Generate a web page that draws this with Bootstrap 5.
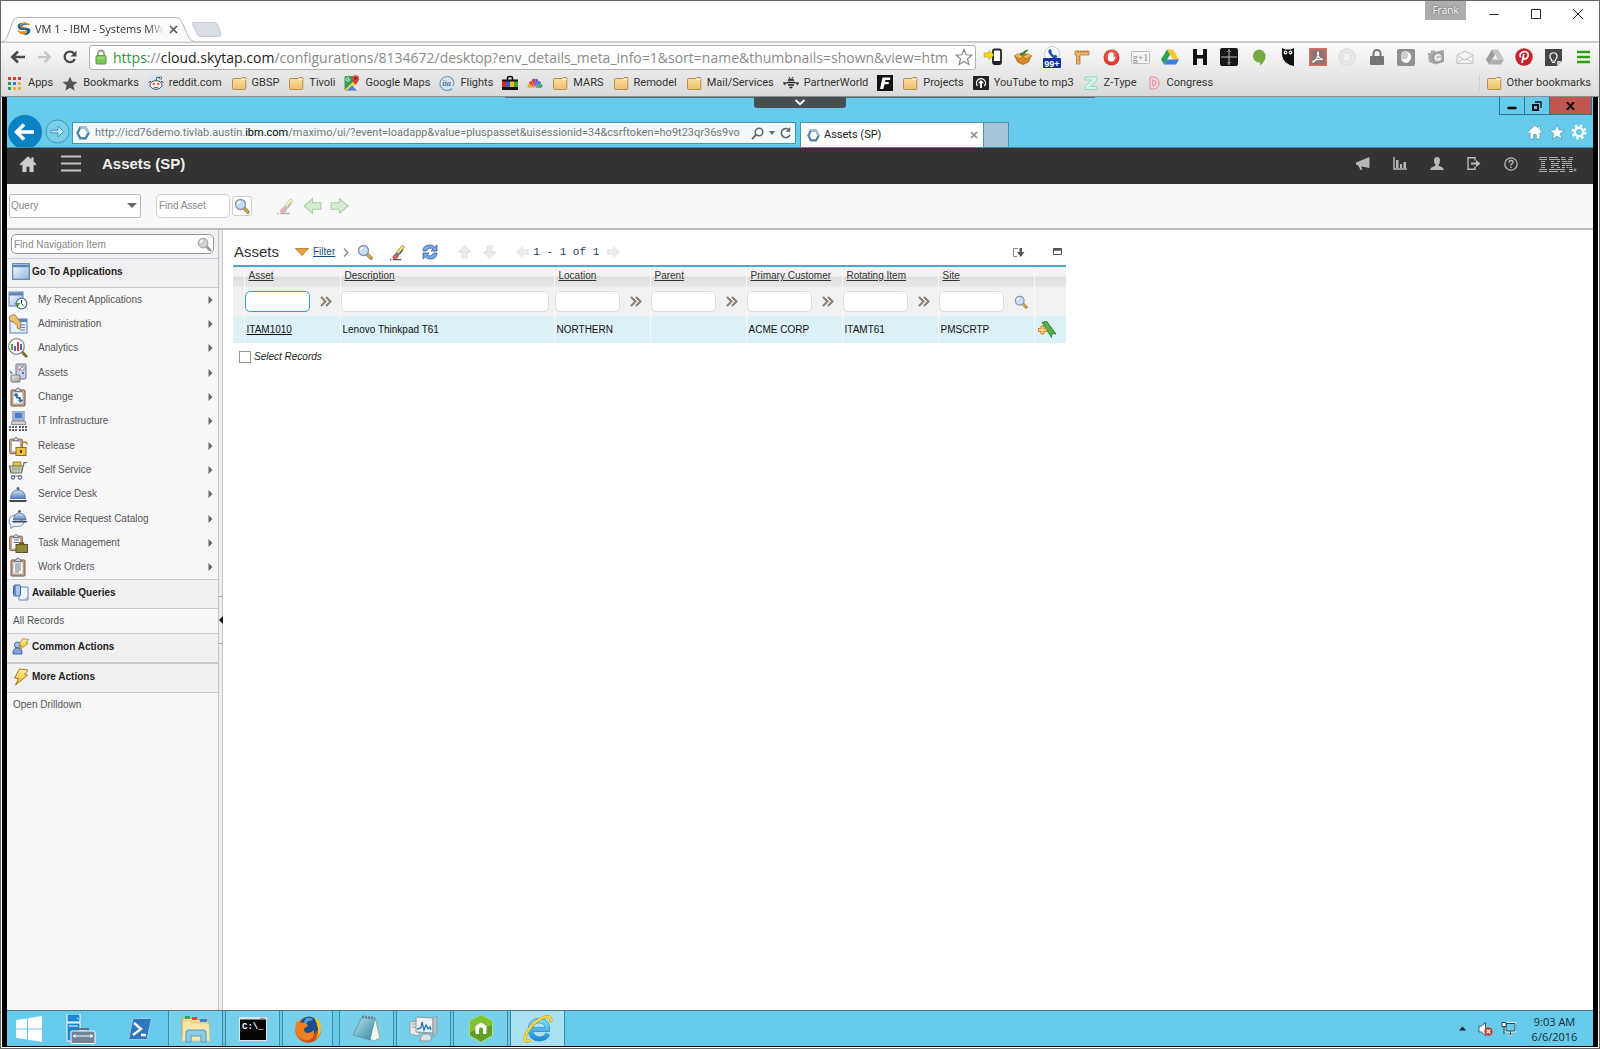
<!DOCTYPE html>
<html lang="en">
<head>
<meta charset="utf-8">
<meta name="viewport" content="width=device-width, initial-scale=1">
<title>Assets (SP)</title>
<link rel="stylesheet" href="https://cdn.jsdelivr.net/npm/bootstrap@5.3.0/dist/css/bootstrap.min.css">
<style>
:root{--ui:"Open Sans","Noto Sans",sans-serif;--narrow:Roboto,"Open Sans",sans-serif;--app:"Liberation Sans",Arial,sans-serif;--sky:#66cbea}
body{font-family:var(--app);font-size:10px;line-height:16px;color:#222;background:#fff;border:1px solid #666}
button{padding:0;border:0;background:none;color:inherit;line-height:1;display:inline-flex;align-items:center;justify-content:center}
svg{display:block;flex:none}
a{color:inherit}
.ui-font{font-family:var(--ui);font-size:11px}
/* browser window */
.title-row{height:40px}
.win-tab{width:190px;height:24px;margin-left:1px;padding:0 14px 0 15px;color:#333}
.win-tab>.tab-shape{left:0;top:0}
.tab-text{mask-image:linear-gradient(90deg,#000 88%,transparent);-webkit-mask-image:linear-gradient(90deg,#000 88%,transparent)}
.user-tag{background:#adadad;color:#fff;font-size:10px;line-height:19px;width:41px;height:19px;text-shadow:0 0 2px #444}
.win-btns{gap:28px;padding:6px 14px 0 21px}
.browser-bars{background:linear-gradient(#fafafa,#dadada);border-top:2px solid #ccc;border-bottom:1px solid #8d8d8d;height:56px;font-family:var(--narrow)}
.nav-row{height:28px;padding:0 6px 0 9px}
.nav-btns{gap:11px;width:79px}
.omni{height:25px;background:#fff;border:1px solid #b0b0b0;border-radius:3px;padding:0 2px 0 5px;width:887px}
.omni-text{font-family:var(--ui);font-size:14px;line-height:23px;color:#8a8a8a;margin-left:6px;outline:0}
.ext-row{padding-left:7px}
.ext-row button{width:20px}
.marks{height:24px;color:#333;padding:0 8px 0 6px;gap:9px}
.marks a{text-decoration:none;gap:5px}
.marks .other{border-left:1px solid #c8d4dc;padding-left:6px}
/* remote desktop */
.remote{border:solid #000;border-width:0 5px 1px;margin:0 1px 1px}
.ie-head{background:var(--sky);border-bottom:1px solid #3c8aa5;height:51px;font-family:var(--narrow)}
.pull-tab{width:92px;height:11px;background:#474f53;border-radius:0 0 3px 3px;left:50%;top:0;margin-left:-46px}
.pull-line{left:498px;right:498px;top:0;height:1px;background:#3e7284}
.ie-ctl{padding-right:1px}
.ie-ctl button{height:18px;width:25px;border:1px solid #35758b;border-top:0;border-right:0}
.ie-ctl .ie-close{width:43px;background:#c25650;border-right:1px solid #35758b}
.ie-row{height:32px}
.ie-addr{height:22px;background:#f1fafd;border:1px solid #4593ac;margin:0 4px 3px 1px;padding:0 3px;gap:5px;color:#777}
.ie-tab{width:184px;height:25px;background:#fff;border:1px solid #4593ac;border-bottom:0;padding:0 5px 0 6px;color:#222}
.ie-new{width:25px;height:25px;background:#a2c6d5;border:1px solid #4593ac;border-left:0;border-bottom:0}
.ie-tools{gap:6px;padding:0 6px 7px 0}
.app-nav{background:#333;height:36px;padding:0 16px 5px 12px;color:#ccc}
.app-nav h1{font-size:15px;line-height:20px;font-weight:700;color:#eee;margin:0 0 0 21px}
.app-nav .right-tools{gap:17px}
.right-tools button{width:20px}
.app-bar{background:#f8f8f8;height:46px;border-bottom:2px solid #bcbcbc;padding:0 2px 1px}
.fld{border:1px solid #d0d0d0;border-radius:5px;background:#fff;font:10px var(--app);padding:0 3px;outline:0;color:#333}
.fld::placeholder{color:#888;opacity:1}
.fld.query{width:132px;height:24px;border-radius:2px;color:#888;padding:0 1px;border-color:#bbb;appearance:none;background:#fff url("data:image/svg+xml,%3Csvg xmlns='http://www.w3.org/2000/svg' width='10' height='5'%3E%3Cpath d='M0 0h10L5 5z' fill='%23666'/%3E%3C/svg%3E") no-repeat right 3px center}
.fld.find{width:74px;height:24px;margin-left:15px;padding:0 2px}
.lens-btn{width:20px;height:20px;border:1px solid #ccc;border-radius:3px;background:#fff;margin-left:2px}
/* side navigation */
.side{width:211px;background:#f7f6f9;color:#555}
.side-find{height:28px;padding:4px;background:#f1f0f4}
.side-find .fld{height:20px;border-color:#999;padding:0 22px 0 2px}
.side-find svg{right:6px;top:7px}
.side h2{font-size:10px;line-height:16px;font-weight:700;color:#222;background:#f0eff2;border-top:1px solid #c9c9cc;border-bottom:1px solid #c9c9cc;height:30px;padding:0 5px 3px;margin:0;gap:2px}
.side .list-group-item{background:none;border:0;color:#555;height:24px;padding:0 5px 0 1px;gap:10px}
.side .list-group-item:nth-child(3n):not(:last-child){margin-bottom:1px}
.side .plain{height:24px;padding:0 6px;text-decoration:none}
.splitter{width:5px;background:#eeedf0;border:solid #c4c4c8;border-width:0 1px}
.grip{top:366px;left:0;width:4px;height:48px;border:solid #aaa;border-width:1px 0}
/* result list */
.work{padding:9px 6px 0 10px}
.list-head{height:26px;width:833px;max-width:100%;color:#333}
.list-head h3{font-size:15px;line-height:20px;margin:0 0 0 1px;color:#333}
.pager{font:11px "Liberation Mono",monospace;color:#1d3c5c}
.grid-list{width:833px;max-width:100%;table-layout:fixed;margin:0;border-top:2px solid #4ea7c6}
.grid-list th,.grid-list td{padding:0;border-left:1px solid #f8f8f8;vertical-align:middle;font-weight:400;color:#333}
.grid-list th:first-child,.grid-list td:first-child{border-left:0}
.grid-list .heads th{height:21px;background:linear-gradient(#f2f2f2 0 45%,#dedede 50%,#e8e8e8);padding:0 0 2px 4px}
.grid-list .finds td{height:29px;background:#f1f1f1}
.grid-list .data td{height:27px;background:#dcf0f7;color:#111;padding-left:2px}
.grid-list .fld{width:65px;height:21px;border-color:#dcdcdc}
.grid-list .fld.wide{width:208px}
.grid-list .fld.now{border-color:#2f9cc0}
.look{margin-left:10px}
.sel-row{padding:6px 0 0 6px;gap:3px;color:#222}
.sel-row input{appearance:none;width:12px;height:12px;border:1px solid #999;background:#fff;margin:0}
/* task bar */
.tasks{height:36px;background:var(--sky);border-top:1px solid #4d7a88}
.tasks .open-app{width:55px;border:solid #3f8aa3;border-width:0 1px;background:#76d0eb;margin-right:2px}
.tasks .open-app.slim{width:51px}
.tasks .open-app.now{background:#a9e0f2}
.clock{line-height:15px;color:#1b2b33;width:77px}
</style>
<script src="https://cdn.jsdelivr.net/npm/bootstrap@5.3.0/dist/js/bootstrap.bundle.min.js"></script>
</head>
<body class="d-flex flex-column min-vh-100">
<svg width="0" height="0" class="position-absolute" aria-hidden="true">
<defs>
<linearGradient id="gGold" x1="0" y1="0" x2="0" y2="1"><stop offset="0" stop-color="#fbe0a6"/><stop offset="1" stop-color="#efbd68"/></linearGradient>
<linearGradient id="gBlue" x1="0" y1="0" x2="1" y2="1"><stop offset="0" stop-color="#fff"/><stop offset="1" stop-color="#8db4e2"/></linearGradient>
<linearGradient id="gBell" x1="0" y1="0" x2="0" y2="1"><stop offset="0" stop-color="#d7e8f8"/><stop offset="1" stop-color="#4e7dbd"/></linearGradient>
<linearGradient id="gSteel" x1="0" y1="0" x2="1" y2="1"><stop offset="0" stop-color="#f2f2f2"/><stop offset="1" stop-color="#9a9a9a"/></linearGradient>
<linearGradient id="gBolt" x1="0" y1="0" x2="0" y2="1"><stop offset="0" stop-color="#fff2a0"/><stop offset="1" stop-color="#f5b325"/></linearGradient>
<linearGradient id="gFox" x1="0" y1="0" x2="1" y2="1"><stop offset="0" stop-color="#f08a24"/><stop offset="1" stop-color="#c63d12"/></linearGradient>
<linearGradient id="gPad" x1="0" y1="0" x2="1" y2="1"><stop offset="0" stop-color="#bfe3ec"/><stop offset="1" stop-color="#2f8ba4"/></linearGradient>
<linearGradient id="gIe" x1="0" y1="0" x2="0" y2="1"><stop offset="0" stop-color="#7fdcf8"/><stop offset="1" stop-color="#1b8fd6"/></linearGradient>
</defs>
<symbol id="folder" viewBox="0 0 16 16"><path d="M1.500 4.500q0-1 1-1h7.500l1-1h3q.8 0 .8.8v10.200q0 1-1 1h-11.300q-1 0-1-1z" fill="url(#gGold)" stroke="#b28643" stroke-width=".9"/><path d="M10.500 4.500h4" stroke="#fff3d6"/></symbol>
<symbol id="lens" viewBox="0 0 16 16"><path d="M10 10l4 4" stroke="#6e6e6e" stroke-width="3.200" stroke-linecap="round"/><path d="M10.800 10.800l3 3" stroke="#e2a33a" stroke-width="2.200" stroke-linecap="round"/><circle cx="6.500" cy="6.500" r="5" fill="#c3dff5" stroke="#8a93a5" stroke-width="1.300"/><path d="M3.500 6.500a3 3 0 0 1 3-3" stroke="#fff" stroke-width="1.300" fill="none"/></symbol>
<symbol id="lensGray" viewBox="0 0 16 16"><path d="M10 10l4 4" stroke="#999" stroke-width="3" stroke-linecap="round"/><circle cx="6.500" cy="6.500" r="5" fill="#d0d0d0" stroke="#a8a8a8" stroke-width="1.300"/><path d="M3.500 6.500a3 3 0 0 1 3-3" stroke="#fff" stroke-width="1.300" fill="none"/></symbol>
<symbol id="eraser" viewBox="0 0 18 18"><path d="M1 16.500h1.500M4 16.500h9" stroke="#555" stroke-width="1.300"/><path d="M8 8.500l5.500-6.500q2.500-.5 3 1.500L11.500 11z" fill="#f3dc7c" stroke="#a08438" stroke-width=".8"/><path d="M8 8.500l3.500 2.500-1.500 2L6.300 10.600z" fill="#5b83c4"/><path d="M6.300 10.600L10 13l-2 2.500H4.500L4 13.500z" fill="#e0605a" stroke="#a33" stroke-width=".6"/><path d="M14.500 6l-3.500 4.500" stroke="#555" stroke-width="1.400"/></symbol>
<symbol id="arrR" viewBox="0 0 18 16"><path d="M1 5h8V1l8 7-8 7v-4H1z" stroke-linejoin="round"/></symbol>
<symbol id="chev" viewBox="0 0 12 11"><path d="M1 1l4.500 4.500L1 10M6 1l4.500 4.500L6 10" fill="none" stroke="#8f7c68" stroke-width="1.900"/></symbol>
<symbol id="caret" viewBox="0 0 5 8"><path d="M.5 0L4.500 4l-4 4z" fill="#666"/></symbol>
<symbol id="hexRing" viewBox="0 0 14 14"><path d="M4.300 1.700h5.400L12.500 7l-2.800 5.300H4.300L1.500 7z" fill="#fff" stroke="#4f83a6" stroke-width="2.400"/><path d="M4.300 1.700h5.400L12.500 7" fill="none" stroke="#9cc3da" stroke-width="2.400"/></symbol>
<symbol id="board" viewBox="0 0 20 20"><rect x="3" y="3" width="14" height="16" rx="1" fill="#d9a878" stroke="#7c5537"/><path d="M5 5h10v12H5z" fill="#fff" stroke="#8a9cb5" stroke-width=".8"/><path d="M6.500 4.500q0-1.500 1.500-1.500 .5-2 2-2t2 2q1.500 0 1.500 1.500z" fill="#cdd3da" stroke="#667" stroke-width=".8"/></symbol>
<symbol id="bolt" viewBox="0 0 18 18"><path d="M7.500 1L16 2l-3.500 4.500 3 .8L3.500 17l3-6.500L2.500 10z" fill="url(#gBolt)" stroke="#a97c1d" stroke-width="1"/></symbol>
<symbol id="houseW" viewBox="0 0 16 16"><path d="M8 1L.5 8.200l1.300 1.200L3 8.400V15h3.700v-4.500h2.600V15H13V8.400l1.200 1 1.300-1.200-2.500-2.400V2h-2v1.900z"/></symbol>
</svg>

<!-- window title -->
<header class="title-row d-flex ui-font">
  <div class="win-tab position-relative d-flex align-items-center align-self-end">
    <svg class="tab-shape position-absolute" width="192" height="25" viewBox="0 0 192 25"><path d="M0 24.500C4 24 5 21 7 15L11 4Q12.500.5 16 .5H174q4 0 5.500 3.500L186 19q2 5 6 5.500" fill="#fbfbfb" stroke="#b5b5b5"/></svg>
    <svg class="position-relative" width="14" height="14" viewBox="0 0 14 14"><path d="M12.500 2.500Q9-.5 4 1T1.500 6.500Q3 8.500 7 8q3-.3 3 1.500t-4 2.500Q10 14.500 13 10.500 14.500 6.500 10 5.800 5 5.500 5 4.200 6 2 12.500 2.500z" fill="#14658f"/><path d="M12.500 2.500Q9 .5 5.500 2T5 5Q6 5.800 9 5.700l-4-.2Q2 4 4 2 8-.5 12.500 2.500zM1 8.500q3 1.800 6 1t3-.5q-.5 3-4 3Q2.500 12 1 8.500z" fill="#f08a1c" stroke="#f08a1c" stroke-width=".8"/></svg>
    <span class="tab-text position-relative text-nowrap ms-1">VM 1 - IBM - Systems MW</span>
    <button class="position-relative ms-auto" aria-label="Close tab"><svg width="9" height="9" viewBox="0 0 9 9"><path d="M1 1l7 7M8 1L1 8" stroke="#555" stroke-width="1.600"/></svg></button>
  </div>
  <button class="align-self-end mb-1" aria-label="New tab"><svg width="30" height="15" viewBox="0 0 30 15"><path d="M1 .5h21q3 0 4 2.500l3 9q.5 2.500-2 2.500H9q-3 0-4-2.500L.5 2Q0 .5 1 .5z" fill="#d8dee6" stroke="#c9ced6"/></svg></button>
  <div class="ms-auto d-flex align-items-start">
    <div class="user-tag text-center">Frank</div>
    <div class="win-btns d-flex">
      <button aria-label="Minimize"><svg width="14" height="14" viewBox="0 0 14 14"><path d="M2.500 7.500h9" stroke="#222"/></svg></button>
      <button aria-label="Maximize"><svg width="14" height="14" viewBox="0 0 14 14"><path d="M2.500 2.500h9v9h-9z" fill="none" stroke="#222"/></svg></button>
      <button aria-label="Close"><svg width="14" height="14" viewBox="0 0 14 14"><path d="M2 2l10 10M12 2L2 12" stroke="#222"/></svg></button>
    </div>
  </div>
</header>

<div class="browser-bars ui-font">
  <div class="nav-row d-flex align-items-center">
    <div class="nav-btns d-flex align-items-center">
      <button aria-label="Back"><svg width="16" height="14" viewBox="0 0 16 14"><path d="M15 7H3M8 1.500L2.300 7 8 12.500" fill="none" stroke="#4a4a4a" stroke-width="2.600"/></svg></button>
      <button aria-label="Forward"><svg width="15" height="14" viewBox="0 0 16 14"><path d="M1 7h12M8 1.500L13.700 7 8 12.500" fill="none" stroke="#c6c6c6" stroke-width="2.400"/></svg></button>
      <button aria-label="Reload"><svg width="14" height="14" viewBox="0 0 14 14"><path d="M11.800 9A5.300 5.300 0 1 1 11 3.400" fill="none" stroke="#4a4a4a" stroke-width="2.300"/><path d="M13.500.5v6h-6z" fill="#4a4a4a"/></svg></button>
    </div>
    <div class="omni d-flex align-items-center flex-shrink-1">
      <svg width="12" height="16" viewBox="0 0 12 16"><path d="M3 7V4.500a3 3 0 0 1 6 0V7" fill="none" stroke="#9a9a9a" stroke-width="1.800"/><rect x="1" y="6.500" width="10" height="8.500" rx="1" fill="#7ac657" stroke="#5a9e3d"/><path d="M2 9h8" stroke="#b5e29c"/></svg>
      <div class="omni-text flex-grow-1 text-nowrap overflow-hidden" role="textbox" aria-label="Address" contenteditable="true" spellcheck="false"><span style="color:#2a9a3b">https</span>://<span style="color:#222">cloud.skytap.com</span>/configurations/8134672/desktop?env_details_meta_info=1&amp;sort=name&amp;thumbnails=shown&amp;view=htm</div>
      <button aria-label="Bookmark this page"><svg width="18" height="18" viewBox="0 0 18 18"><path d="M9 1.500l2.200 5.300 5.600.4-4.300 3.700 1.400 5.600L9 13.500l-4.900 3 1.400-5.600L1.200 7.200l5.600-.4z" fill="#fff" stroke="#888" stroke-width="1.200"/></svg></button>
    </div>
    <div class="ext-row d-flex flex-grow-1 justify-content-between align-items-center">
      <button aria-label="Send to phone"><svg width="20" height="18" viewBox="0 0 20 18"><rect x="10" y="1.500" width="8" height="14.500" rx="1.500" fill="#fff" stroke="#222" stroke-width="1.800"/><path d="M10 13h8v3h-8z" fill="#222"/><path d="M1 5h5V2.500L11 7 6 11.500V9H1z" fill="#f6d912" stroke="#b99e0b" stroke-width=".6"/></svg></button>
      <button aria-label="Basket"><svg width="18" height="16" viewBox="0 0 18 16"><path d="M1 7l8-3 8 3-2.500 6-5.500 2.500L3.500 13z" fill="#d98a2b" stroke="#9a5d15" stroke-width=".7"/><path d="M0 7l4-2.500 5 3L6 10zM18 7l-4-2.500-5 3 3 2.500z" fill="#f2b65c" stroke="#9a5d15" stroke-width=".5"/><path d="M6 4.500l2.500 2L14 1l-3.500 1-2 2z" fill="#3f9b2d" stroke="#2d7a20" stroke-width=".8"/></svg></button>
      <button aria-label="Calls 99+"><svg width="20" height="22" viewBox="0 0 20 22"><circle cx="10" cy="8" r="7.500" fill="#fff" stroke="#bcd"/><path d="M7 3.500q-2 2 1.500 6t6 2.500l1-2-2.500-1.200-1.200.8-2.600-3 .8-1.300L8.500 3z" fill="#1c57b8"/><rect x="1" y="12" width="18" height="10" rx="1" fill="#1232a0"/><text x="10" y="20.500" text-anchor="middle" font-size="9" font-weight="700" fill="#fff" font-family="Liberation Sans">99+</text></svg></button>
      <button aria-label="Ruler"><svg width="16" height="16" viewBox="0 0 16 16"><path d="M1 2h14v4H6v9H2.500V6H1z" fill="#eeb568" stroke="#b07a2f" stroke-width=".8"/><path d="M4 2v2M7 2v2M10 2v2M13 2v2M4.500 8H6M4.500 11H6" stroke="#85591f" stroke-width=".7"/></svg></button>
      <button aria-label="Ad blocker"><svg width="17" height="17" viewBox="0 0 17 17"><circle cx="8.500" cy="8.500" r="8" fill="#e03a2c"/><circle cx="8.500" cy="7" r="6" fill="#f07a6c" opacity=".5"/><path d="M5 8V5.500q.6-.8 1.200 0V4q.7-.8 1.400 0v-.5q.8-.8 1.500 0V4q.8-.8 1.500 0v4.500l1.200-1q1 .2.500 1L10.500 12.500h-4L5 10.500z" fill="#fff"/></svg></button>
      <button aria-label="Plus one"><svg width="19" height="13" viewBox="0 0 19 13"><rect x=".5" y=".5" width="18" height="12" rx="1" fill="#f6f6f6" stroke="#bbb"/><text x="9.500" y="9.500" text-anchor="middle" font-size="10" fill="#888" font-family="Liberation Serif">g+1</text></svg></button>
      <button aria-label="Drive"><svg width="18" height="16" viewBox="0 0 18 16"><path d="M6 .5h6l6 10h-6z" fill="#f7c52d"/><path d="M6 .5l3 5.200L3 15.500l-3-5z" fill="#2f9e58"/><path d="M6 10.500h12l-3 5H3z" fill="#3d7de0"/></svg></button>
      <button aria-label="H extension"><svg width="16" height="16" viewBox="0 0 16 16"><path d="M1 0h4v6h6V0h4v16h-4V9.500H5V16H1z" fill="#111"/></svg></button>
      <button aria-label="Panes"><svg width="18" height="18" viewBox="0 0 18 18"><rect width="18" height="18" rx="2" fill="#161616"/><path d="M9 1v16M1 9h16" stroke="#bbb"/><path d="M7 4l2-2 2 2M7 14l2 2 2-2" fill="none" stroke="#888"/></svg></button>
      <button aria-label="Hangouts"><svg width="14" height="17" viewBox="0 0 14 17"><path d="M7 .5a6.500 6.500 0 0 1 6.500 6.500Q13.500 12.500 8 16.500V13.500A6.500 6.500 0 1 1 7 .5z" fill="#76a93f"/></svg></button>
      <button aria-label="Owl"><svg width="12" height="18" viewBox="0 0 12 18"><path d="M0 0l3 1.500h6L12 0v18Q1 16 0 7z" fill="#111"/><circle cx="3.500" cy="4.500" r="1.900" fill="#fff"/><circle cx="8.500" cy="4.500" r="1.900" fill="#fff"/><circle cx="3.700" cy="4.500" r=".8"/><circle cx="8.300" cy="4.500" r=".8"/></svg></button>
      <button aria-label="PDF"><svg width="18" height="18" viewBox="0 0 18 18"><rect x=".75" y=".75" width="16.500" height="16.500" fill="#8e7573" stroke="#dd6d61" stroke-width="1.500"/><path d="M9 4q-1 1 0 4 1.500 3 5 3.500-5-1-9.500 1.500-1.500 1-.5 1.200Q6 14 9 8q1.200-3.500 0-4z" fill="none" stroke="#fff" stroke-width="1.100"/></svg></button>
      <button aria-label="Disc"><svg width="18" height="18" viewBox="0 0 18 18"><circle cx="9" cy="9" r="8.300" fill="#e8e8e8" stroke="#d8d8d8"/><circle cx="9" cy="9" r="4.500" fill="#f0f0f0" stroke="#dadada"/></svg></button>
      <button aria-label="Lock"><svg width="14" height="16" viewBox="0 0 14 16"><path d="M3.500 8V4.500a3.500 3.500 0 0 1 7 0V8" fill="none" stroke="#777" stroke-width="2"/><rect y="7" width="14" height="9" rx="1" fill="#757575"/></svg></button>
      <button aria-label="Moon"><svg width="18" height="17" viewBox="0 0 18 17"><rect width="18" height="17" rx="2" fill="#909090"/><path d="M5 3.500q3-2 6-.5 4 2 3 6-1 4.500-5 5Q4.500 13 4 8.500 4 5 5 3.500z" fill="#fff"/><path d="M5 3.500q3-1.500 5 0 2 3 0 5.500-2 2-5 1-2-3 0-6.500z" fill="#ccc"/></svg></button>
      <button aria-label="Camera"><svg width="18" height="16" viewBox="0 0 18 16"><path d="M1 4h3V1.500h4L9 3l6-2 2 1v11l-9 2.500L2 13z" fill="#a8a8a8"/><circle cx="11" cy="8.500" r="5" fill="#c4c4c4" stroke="#8a8a8a"/><path d="M13 7a2.500 2.500 0 1 0 .3 2.500H11.500" fill="none" stroke="#fff" stroke-width="1.200"/></svg></button>
      <button aria-label="Mail"><svg width="18" height="14" viewBox="0 0 18 14"><path d="M1 5l8-4 8 4v8.500H1z" fill="#f3f3f3" stroke="#c4c4c4"/><path d="M1 5l8 5 8-5M1 13l6-4M17 13l-6-4" fill="none" stroke="#c4c4c4"/></svg></button>
      <button aria-label="Drive offline"><svg width="18" height="16" viewBox="0 0 18 16"><path d="M6 .5h6l6 10h-6z" fill="#c4c4c4"/><path d="M6 .5l3 5.200L3 15.500l-3-5z" fill="#9b9b9b"/><path d="M6 10.500h12l-3 5H3z" fill="#aeaeae"/></svg></button>
      <button aria-label="Pinterest"><svg width="18" height="18" viewBox="0 0 18 18"><circle cx="9" cy="9" r="8.700" fill="#cb1f2b"/><path d="M8.800 6L7 15M5.800 9.500Q4.200 7 6 5q2-2 5-1.200 3 1.200 2 4.500-1 2.700-3 2.700-1.500-.2-1.700-1.500" fill="none" stroke="#fff" stroke-width="1.700"/></svg></button>
      <button aria-label="Keep"><svg width="17" height="17" viewBox="0 0 17 17"><path d="M0 0h17v12l-5 5H0z" fill="#474747"/><path d="M17 12h-5v5z" fill="#ccc"/><path d="M6.500 10.500q-2-1.800-1.500-4A3.600 3.600 0 0 1 12 6.500q.5 2.200-1.500 4v1.500h-4zM7 13.500h3" fill="none" stroke="#fff" stroke-width="1.200"/></svg></button>
      <button aria-label="Menu"><svg width="13" height="14" viewBox="0 0 13 14"><path d="M0 2h13M0 7h13M0 12h13" stroke="#2f9d12" stroke-width="2.600"/></svg></button>
    </div>
  </div>
  <nav class="marks d-flex align-items-center text-nowrap" aria-label="Bookmarks">
    <a href="#" class="d-flex align-items-center"><svg width="16" height="14" viewBox="0 0 16 14"><g fill="#d93a2f"><path d="M1 1h3v3H1zM6 1h3v3H6zM11 1h3v3h-3z"/></g><path d="M1 6h3v3H1zM1 11h3v3H1z" fill="#2e9a4c"/><path d="M6 6h3v3H6z" fill="#3b78d8"/><path d="M11 6h3v3h-3zM6 11h3v3H6zM11 11h3v3h-3z" fill="#f0b429"/></svg>Apps</a>
    <a href="#" class="d-flex align-items-center"><svg width="16" height="15" viewBox="0 0 16 15"><path d="M8 .5l2.100 5 5.400.4-4.100 3.500 1.300 5.300L8 11.800l-4.700 2.900 1.300-5.300L.5 5.900l5.400-.4z" fill="#555"/></svg>Bookmarks</a>
    <a href="#" class="d-flex align-items-center"><svg width="16" height="16" viewBox="0 0 16 16"><rect width="16" height="16" fill="#d3e5f7"/><ellipse cx="8" cy="10" rx="6" ry="4.300" fill="#fff" stroke="#333" stroke-width=".9"/><circle cx="5.700" cy="9" r="1.200" fill="#f24a1e"/><circle cx="10.300" cy="9" r="1.200" fill="#f24a1e"/><path d="M5.500 12q2.500 1.500 5 0M8 5.500L9 2l3 .8" fill="none" stroke="#333" stroke-width=".8"/><circle cx="12.500" cy="3" r="1.200" fill="#fff" stroke="#333" stroke-width=".7"/><path d="M1 8q0-2 2-1.500M15 8q0-2-2-1.500" fill="none" stroke="#333" stroke-width=".8"/></svg>reddit.com</a>
    <a href="#" class="d-flex align-items-center"><svg width="16" height="16"><use href="#folder"/></svg>GBSP</a>
    <a href="#" class="d-flex align-items-center"><svg width="16" height="16"><use href="#folder"/></svg>Tivoli</a>
    <a href="#" class="d-flex align-items-center"><svg width="16" height="16" viewBox="0 0 16 16"><rect x=".5" y="1" width="14" height="14.500" rx="1.500" fill="#3f9f56"/><path d="M4 15.500L15 5v9.500q0 1-1 1z" fill="#e9e9e9"/><path d="M.5 15L10 6l3 2-6 7.500z" fill="#f5d04c"/><path d="M3 15.500l5-5 5 5z" fill="#4a82e4"/><path d="M11.500 10Q8 6 8.300 3.500a3.300 3.300 0 0 1 6.600 0Q15 6 11.500 10z" fill="#da4336"/><circle cx="11.600" cy="3.500" r="1.200" fill="#75130b"/><path d="M5.500 4.500H4M5.300 3.400a1.800 1.800 0 1 0 .3 1.600" fill="none" stroke="#fff" stroke-width=".8"/></svg>Google Maps</a>
    <a href="#" class="d-flex align-items-center"><svg width="16" height="16" viewBox="0 0 16 16"><path d="M13 13.500A7 7 0 1 1 15 8q-.3 2.500-2 2.500" fill="none" stroke="#5f9fce" stroke-width="1.100"/><text x="7.500" y="10.500" text-anchor="middle" font-size="8" font-style="italic" font-weight="700" fill="#2a78b8" font-family="Liberation Serif">ita</text></svg>Flights</a>
    <a href="#" aria-label="Shopping"><svg width="16" height="16" viewBox="0 0 16 16"><path d="M5.500 5V3q0-1.500 2.500-1.500T10.500 3v2" fill="none" stroke="#111" stroke-width="1.500"/><path d="M0 4.500h16V15H0z" fill="#111"/><path d="M0 6.500h4V12H0z" fill="#d8232a"/><path d="M4 6.500h4V12H4z" fill="#2b63c4"/><path d="M8 6.500h4V12H8z" fill="#f2b71f"/><path d="M12 6.500h4V12h-4z" fill="#46a03a"/></svg></a>
    <a href="#" aria-label="NBC"><svg width="16" height="12" viewBox="0 0 16 12"><path d="M7.500 11L1 10.500Q-.5 8 2 7z" fill="#f2a51a"/><path d="M7.500 10.500L2 6.500Q2 3.500 4.700 4z" fill="#e2492c"/><path d="M7.800 10L4.800 3.500Q5.500 1 7.800 2z" fill="#c22a6e"/><path d="M8.200 10V2q2.300-1 3 1.500z" fill="#7a4fb0"/><path d="M8.500 10.500L11.300 4Q14 3.500 14 6.500z" fill="#2f7fd0"/><path d="M8.500 11L14 7q2.500 1 1 3.500z" fill="#35a853"/></svg></a>
    <a href="#" class="d-flex align-items-center"><svg width="16" height="16"><use href="#folder"/></svg>MARS</a>
    <a href="#" class="d-flex align-items-center"><svg width="16" height="16"><use href="#folder"/></svg>Remodel</a>
    <a href="#" class="d-flex align-items-center"><svg width="16" height="16"><use href="#folder"/></svg>Mail/Services</a>
    <a href="#" class="d-flex align-items-center"><svg width="16" height="12" viewBox="0 0 16 12"><path d="M5 3h6M4 5.500h8M5 8h6M6.500 10.500h3" stroke="#222" stroke-width="1.400"/><path d="M0 5l5 .5-4 3zM16 5l-5 .5 4 3z" fill="#444"/><path d="M6 0l1.500 2.500M10 0L8.500 2.500" stroke="#222"/></svg>PartnerWorld</a>
    <a href="#" aria-label="Feed"><svg width="16" height="16" viewBox="0 0 16 16"><rect width="16" height="16" fill="#111"/><path d="M5.500 2.500h8L13 5H8.500L8 7h4l-.6 2.300H7.500L6.300 14H3z" fill="#fff"/></svg></a>
    <a href="#" class="d-flex align-items-center"><svg width="16" height="16"><use href="#folder"/></svg>Projects</a>
    <a href="#" class="d-flex align-items-center"><svg width="16" height="14" viewBox="0 0 16 14"><rect width="16" height="14" rx="1" fill="#222"/><path d="M4.500 10A4.500 4.500 0 1 1 11.500 10" fill="none" stroke="#fff" stroke-width="1.300"/><path d="M8 4l3 3.200H9V12H7V7.200H5z" fill="#fff"/></svg>YouTube to mp3</a>
    <a href="#" class="d-flex align-items-center"><svg width="16" height="16" viewBox="0 0 16 16"><path d="M2 2h12v3L7.500 11.500H14v3H2v-3L8.500 5H2z" fill="#d9f3ea" stroke="#85dcc0"/></svg>Z-Type</a>
    <a href="#" class="d-flex align-items-center"><svg width="16" height="14" viewBox="0 0 16 14"><path d="M4 1h4q5 1 5 6t-5 6H4zM6.800 4v6q3-.2 3-3t-3-3z" fill="#f8d5dd" stroke="#e88ca4" fill-rule="evenodd"/></svg>Congress</a>
    <a href="#" class="other d-flex align-items-center ms-auto"><svg width="16" height="16"><use href="#folder"/></svg>Other bookmarks</a>
  </nav>
</div>

<!-- remote desktop session -->
<div class="remote flex-grow-1 d-flex flex-column">
  <div class="ie-head position-relative d-flex flex-column ui-font">
    <div class="pull-line position-absolute"></div>
    <button class="pull-tab position-absolute" aria-label="Show session toolbar"><svg width="12" height="7" viewBox="0 0 12 7"><path d="M1.500 1L6 5.200 10.500 1" fill="none" stroke="#fff" stroke-width="2"/></svg></button>
    <div class="ie-ctl d-flex justify-content-end">
      <button aria-label="Minimize"><svg width="10" height="10" viewBox="0 0 10 10"><path d="M.5 7h9" stroke="#111" stroke-width="2.600"/></svg></button>
      <button aria-label="Restore"><svg width="10" height="10" viewBox="0 0 10 10"><path d="M1 4h5v5H1z" fill="none" stroke="#111" stroke-width="2"/><path d="M3 1h6v6" fill="none" stroke="#111" stroke-width="1.300"/></svg></button>
      <button class="ie-close" aria-label="Close"><svg width="9" height="8" viewBox="0 0 9 8"><path d="M1 0l7 8M8 0L1 8" stroke="#111" stroke-width="2"/></svg></button>
    </div>
    <div class="ie-row d-flex align-items-end">
      <div class="w-50 d-flex align-items-end">
        <button class="flex-shrink-0" aria-label="Back"><svg width="36" height="32" viewBox="0 0 36 32"><circle cx="18" cy="17" r="17" fill="#0b82c4"/><path d="M27 17H11M17 9.500L9.500 17l7.500 7.500" fill="none" stroke="#fff" stroke-width="3.500"/></svg></button>
        <button class="flex-shrink-0" aria-label="Forward"><svg width="28" height="29" viewBox="0 0 28 29"><circle cx="14.500" cy="13.500" r="11.500" fill="#79cfea" stroke="#3e9abb"/><path d="M8 12.200h7V8l5.500 5.500L15 19v-4.200H8z" fill="#c6ecf7" stroke="#3e9abb"/></svg></button>
        <div class="ie-addr d-flex align-items-center flex-grow-1 overflow-hidden">
          <svg width="14" height="14"><use href="#hexRing"/></svg>
          <div class="flex-grow-1 text-nowrap overflow-hidden" role="textbox" aria-label="Address" contenteditable="true" spellcheck="false">http://icd76demo.tivlab.austin.<span class="text-black">ibm.com</span>/maximo/ui/?event=loadapp&amp;value=pluspasset&amp;uisessionid=34&amp;csrftoken=ho9t23qr36s9vo</div>
          <button aria-label="Search"><svg width="13" height="13" viewBox="0 0 13 13"><circle cx="8" cy="5" r="3.800" fill="none" stroke="#666" stroke-width="1.600"/><path d="M5.300 7.700L1 12" stroke="#666" stroke-width="1.800"/></svg></button>
          <button aria-label="Suggestions"><svg width="6" height="4" viewBox="0 0 6 4"><path d="M0 0h6L3 4z" fill="#666"/></svg></button>
          <button aria-label="Refresh"><svg width="12" height="12" viewBox="0 0 14 14"><path d="M11.800 9A5.300 5.300 0 1 1 10 2.800" fill="none" stroke="#666" stroke-width="1.900"/><path d="M12 0v5.500H6.500z" fill="#666"/></svg></button>
        </div>
      </div>
      <div class="ie-tab d-flex align-items-center"><svg width="13" height="13" class="me-1"><use href="#hexRing"/></svg><span>Assets (SP)</span><button class="ms-auto" aria-label="Close tab"><svg width="8" height="8" viewBox="0 0 8 8"><path d="M1 1l6 6M7 1L1 7" stroke="#888" stroke-width="1.600"/></svg></button></div>
      <button class="ie-new" aria-label="New tab"></button>
      <div class="ie-tools d-flex ms-auto">
        <button aria-label="Home"><svg width="16" height="16" fill="#fff" stroke="#3a85a0" stroke-width=".6"><use href="#houseW"/></svg></button>
        <button aria-label="Favorites"><svg width="16" height="16" viewBox="0 0 16 16"><path d="M8 .7l2.100 5.100 5.400.4-4.100 3.600 1.300 5.400L8 12.200l-4.700 3 1.300-5.400L.5 6.200l5.400-.4z" fill="#fff" stroke="#3a85a0" stroke-width=".6"/></svg></button>
        <button aria-label="Tools"><svg width="16" height="16" viewBox="0 0 16 16"><circle cx="8" cy="8" r="6.300" fill="none" stroke="#fff" stroke-width="2.500" stroke-dasharray="2.600 2.350"/><circle cx="8" cy="8" r="4.200" fill="none" stroke="#fff" stroke-width="2.200"/></svg></button>
      </div>
    </div>
  </div>

  <nav class="app-nav d-flex align-items-center">
    <button aria-label="Start center"><svg width="18" height="18" fill="#ccc"><use href="#houseW"/></svg></button>
    <button aria-label="Menu" class="ms-4"><svg width="20" height="17" viewBox="0 0 20 17"><path d="M0 1.500h20M0 8.500h20M0 15.500h20" stroke="#c4c4c4" stroke-width="2.200"/></svg></button>
    <h1>Assets (SP)</h1>
    <div class="right-tools d-flex align-items-center ms-auto">
      <button aria-label="Bulletins"><svg width="14" height="14" viewBox="0 0 14 14"><path d="M13.500 0v11L6 9.500H5l1.500 3-2 .5L2.500 9 0 7.500v-2z" fill="#b8b8b8"/></svg></button>
      <button aria-label="Reports"><svg width="14" height="13" viewBox="0 0 14 13"><path d="M1 0v12h13" fill="none" stroke="#b8b8b8" stroke-width="1.500"/><path d="M3 3h2.500v8H3zM7 7h2v4H7zM10.500 5H13v6h-2.500z" fill="#b8b8b8"/></svg></button>
      <button aria-label="Profile"><svg width="14" height="13" viewBox="0 0 14 13"><path d="M7 0q3 0 3 3.300T8.500 8q0 1 2 1.500 3 .7 3.500 3.500H0q.5-2.800 3.500-3.500 2-.5 2-1.500Q4 6.500 4 3.300T7 0z" fill="#b8b8b8"/></svg></button>
      <button aria-label="Sign out"><svg width="14" height="13" viewBox="0 0 14 13"><path d="M8 3.500V.8H1v11.400h7V9.500" fill="none" stroke="#b8b8b8" stroke-width="1.400"/><path d="M4 5.500h5V3l4.500 3.500L9 10V7.500H4z" fill="#b8b8b8"/></svg></button>
      <button aria-label="Help"><svg width="14" height="14" viewBox="0 0 14 14"><circle cx="7" cy="7" r="6.200" fill="none" stroke="#b8b8b8" stroke-width="1.300"/><path d="M5 5.500q0-2 2-2t2 1.700Q9 6.500 7 7.300V8.500M7 9.500V11" fill="none" stroke="#b8b8b8" stroke-width="1.300"/></svg></button>
      <svg width="39" height="16" viewBox="0 0 39 16" role="img" aria-label="IBM"><g fill="none" stroke="#aaa"><path d="M1 1.500h8M11 1.500h9M23 1.500h4M31 1.500h4M1 3.500h8M11 3.500h11M23 3.500h5M30 3.500h5M3 5.500h4M13 5.500h3M19 5.500h3M24 5.500h5M29.500 5.500H34M3 7.500h4M13 7.500h8M24 7.500h10M3 9.500h4M13 9.500h8M24 9.500h3M28 9.500h3M31.500 9.500H34M3 11.500h4M13 11.500h3M19 11.500h3M24 11.500h3M28.500 11.500h2M31.500 11.500H34M1 13.500h8M11 13.500h11M22 13.500h5M31 13.500h4M1 15.500h8M11 15.500h9M22 15.500h5M31 15.500h4"/><circle cx="37" cy="14" r="1"/></g></svg>
    </div>
  </nav>

  <div class="app-bar d-flex align-items-center">
    <select class="fld query" aria-label="Query"><option>Query</option></select>
    <input class="fld find" type="text" placeholder="Find Asset" aria-label="Find Asset">
    <button class="lens-btn" aria-label="Search"><svg width="16" height="16"><use href="#lens"/></svg></button>
    <button class="ms-4" aria-label="Clear"><svg width="19" height="18" opacity=".45"><use href="#eraser"/></svg></button>
    <button class="ms-2" aria-label="Previous record"><svg width="19" height="18" viewBox="0 0 18 16"><path d="M17 5H9V1L1 8l8 7v-4h8z" fill="#d5ecd0" stroke="#a9d0a5"/></svg></button>
    <button class="ms-2" aria-label="Next record"><svg width="19" height="18" fill="#d5ecd0" stroke="#a9d0a5"><use href="#arrR"/></svg></button>
  </div>

  <div class="d-flex flex-grow-1 bg-white">
    <aside class="side flex-shrink-0">
      <div class="side-find position-relative"><input class="fld w-100" type="text" placeholder="Find Navigation Item" aria-label="Find Navigation Item"><svg class="position-absolute" width="15" height="15"><use href="#lensGray"/></svg></div>
      <h2 class="d-flex align-items-center"><svg width="18" height="17" viewBox="0 0 18 17"><rect x=".7" y=".7" width="16.600" height="15.600" fill="url(#gBlue)" stroke="#5d85b8" stroke-width="1.200"/><path d="M1 3h16" stroke="#5d85b8" stroke-width="2.500"/></svg>Go To Applications</h2>
      <div class="list-group list-group-flush">
        <a href="#" class="list-group-item d-flex align-items-center"><svg width="20" height="20" viewBox="0 0 20 20"><rect x="1" y="2" width="14" height="14" fill="url(#gBlue)" stroke="#5d85b8"/><path d="M1 4h14" stroke="#5d85b8" stroke-width="3"/><circle cx="13.500" cy="13.500" r="5.300" fill="#fff" stroke="#5b7c9c" stroke-width="1.300"/><path d="M13.500 10v3.500l2 2" fill="none" stroke="#333"/><path d="M6.500 13h6L9.500 17z" fill="#3da03a"/></svg><span>My Recent Applications</span><svg class="ms-auto" width="5" height="8"><use href="#caret"/></svg></a>
        <a href="#" class="list-group-item d-flex align-items-center"><svg width="20" height="20" viewBox="0 0 20 20"><rect x="2" y="5" width="17" height="14" fill="#e6effa" stroke="#5d85b8"/><path d="M2 6.500h17" stroke="#5d85b8" stroke-width="3"/><path d="M12 11h5M12 13.500h5M12 16h5" stroke="#5d85b8"/><path d="M4 1q4-1 5 3l4 5-1 6-3-1 .5-2.500L5 8Q.5 7 1 4 1.500 1.500 4 1z" fill="#ecc074" stroke="#a87a36" stroke-width=".9"/></svg><span>Administration</span><svg class="ms-auto" width="5" height="8"><use href="#caret"/></svg></a>
        <a href="#" class="list-group-item d-flex align-items-center"><svg width="20" height="20" viewBox="0 0 20 20"><path d="M14 14l5 5" stroke="#7b7335" stroke-width="3"/><circle cx="8.500" cy="8.500" r="7.800" fill="#fff" stroke="#8d8d95" stroke-width="1.300"/><path d="M4 6v6" stroke="#42a13f" stroke-width="2"/><path d="M7 8v5" stroke="#7656b4" stroke-width="2"/><path d="M10 4v9" stroke="#cc3d3d" stroke-width="2"/><path d="M13 6v6" stroke="#3e6fca" stroke-width="2"/></svg><span>Analytics</span><svg class="ms-auto" width="5" height="8"><use href="#caret"/></svg></a>
        <a href="#" class="list-group-item d-flex align-items-center"><svg width="20" height="20" viewBox="0 0 20 20"><rect x="8" y="1" width="10" height="15" rx="1" fill="#c9d2de" stroke="#69798f"/><path d="M10 3h6v4h-6z" fill="#fff" stroke="#69798f" stroke-width=".7"/><path d="M11 6.500l4-3" stroke="#d33"/><path d="M14 9h2v2h-2z" fill="#4b79ba"/><rect x="3" y="12" width="9" height="7" rx="1" fill="url(#gSteel)" stroke="#777"/><path d="M1 7l4 3-2 1z" fill="#3f77c0"/></svg><span>Assets</span><svg class="ms-auto" width="5" height="8"><use href="#caret"/></svg></a>
        <a href="#" class="list-group-item d-flex align-items-center"><svg width="20" height="20" viewBox="0 0 20 20"><use href="#board" width="20" height="20"/><path d="M8 7.500v3.500h3M12.500 14v-3.500H9.500M8 6l-2 2.500h4zM12.500 15.500l-2-2.500h4z" fill="#3467a8" stroke="#3467a8" stroke-width=".8"/></svg><span>Change</span><svg class="ms-auto" width="5" height="8"><use href="#caret"/></svg></a>
        <a href="#" class="list-group-item d-flex align-items-center"><svg width="20" height="20" viewBox="0 0 20 20"><rect x="5" y="0" width="11" height="9" fill="#dfe4ea" stroke="#778"/><path d="M6.500 1.500h8v6h-8z" fill="#4a7fd0"/><path d="M4 10h13l1 3.500H3z" fill="#cbd2da" stroke="#778" stroke-width=".8"/><path d="M1 16h8M11 16h8M1 19h8M11 19h8" stroke="#333" stroke-dasharray="2 1" stroke-width="1.300"/></svg><span>IT Infrastructure</span><svg class="ms-auto" width="5" height="8"><use href="#caret"/></svg></a>
        <a href="#" class="list-group-item d-flex align-items-center"><svg width="20" height="20" viewBox="0 0 20 20"><use href="#board" width="18" height="19" x="-1"/><path d="M14 12V8.500a2.500 2.500 0 0 1 5 0" fill="none" stroke="#b8862a" stroke-width="1.500"/><rect x="8" y="11.500" width="10" height="8" fill="#f2c341" stroke="#8d6a18"/><path d="M13 14v3" stroke="#333" stroke-width="1.800"/></svg><span>Release</span><svg class="ms-auto" width="5" height="8"><use href="#caret"/></svg></a>
        <a href="#" class="list-group-item d-flex align-items-center"><svg width="20" height="20" viewBox="0 0 20 20"><path d="M5 2h8v5H5z" fill="#e6c24a" stroke="#8d7428" stroke-width=".8"/><path d="M19 2.500h-3L13.500 13H3L1.500 6h13" fill="#cbd2b5" stroke="#6e7458" stroke-width="1.200"/><path d="M4 9h10M5 6v7M8 6v7M11 6v7" stroke="#8d937a" stroke-width=".7"/><path d="M3 16h11" stroke="#778"/><circle cx="5" cy="17.500" r="1.700" fill="#fff" stroke="#334a80"/><circle cx="12" cy="17.500" r="1.700" fill="#fff" stroke="#334a80"/></svg><span>Self Service</span><svg class="ms-auto" width="5" height="8"><use href="#caret"/></svg></a>
        <a href="#" class="list-group-item d-flex align-items-center"><svg width="20" height="20" viewBox="0 0 20 20"><circle cx="10" cy="4.500" r="1.500" fill="#567"/><path d="M2.500 14.500Q3 6 10 6t7.500 8.500z" fill="url(#gBell)" stroke="#48698f" stroke-width=".8"/><path d="M1 16h18l-1 2H2z" fill="#444b55"/></svg><span>Service Desk</span><svg class="ms-auto" width="5" height="8"><use href="#caret"/></svg></a>
        <a href="#" class="list-group-item d-flex align-items-center"><svg width="20" height="20" viewBox="0 0 20 20"><path d="M7 6q-6 1-6 6 0 3 2 4.500L2.500 19.500 6 17.500q8 1 10-4z" fill="#e8f1fa" stroke="#6f93b8"/><circle cx="11.500" cy="2.500" r="1.400" fill="#567"/><path d="M5.500 11Q6 4 11.500 4T18 11z" fill="url(#gBell)" stroke="#48698f" stroke-width=".8"/><path d="M4 12h15.500l-1 1.500H5z" fill="#444b55"/></svg><span>Service Request Catalog</span><svg class="ms-auto" width="5" height="8"><use href="#caret"/></svg></a>
        <a href="#" class="list-group-item d-flex align-items-center"><svg width="20" height="20" viewBox="0 0 20 20"><use href="#board" width="18" height="19" x="-1"/><path d="M6 7h5M6 9.500h5" stroke="#667"/><path d="M11.500 12v-2h4v2" fill="none" stroke="#5c5a22" stroke-width="1.300"/><rect x="8" y="11.500" width="11.500" height="8" fill="#8d8a3c" stroke="#5c5a22"/></svg><span>Task Management</span><svg class="ms-auto" width="5" height="8"><use href="#caret"/></svg></a>
        <a href="#" class="list-group-item d-flex align-items-center"><svg width="20" height="20" viewBox="0 0 20 20"><use href="#board" width="20" height="20"/><path d="M7 7h6M7 9h6M7 11h6M7 13h6M7 15h4" stroke="#566" stroke-width=".9"/></svg><span>Work Orders</span><svg class="ms-auto" width="5" height="8"><use href="#caret"/></svg></a>
      </div>
      <h2 class="d-flex align-items-center"><svg width="18" height="18" viewBox="0 0 18 18"><path d="M7 3h9v13H7z" fill="#eef4fb" stroke="#6d8cb5"/><path d="M12 16l4-4v4z" fill="#9db5d6"/><rect x="1.500" y="1" width="7" height="11" rx="1.500" fill="#a9c5ea" stroke="#3e649c"/><path d="M3 1.500v10" stroke="#5f8acc" stroke-width="2"/></svg>Available Queries</h2>
      <a href="#" class="plain d-flex align-items-center">All Records</a>
      <h2 class="d-flex align-items-center"><svg width="18" height="18" viewBox="0 0 18 18"><circle cx="5.500" cy="7" r="3" fill="#a7c1e8" stroke="#4568a5"/><path d="M1 16q-.5-6 4.500-6t4.500 6z" fill="#7fa3dc" stroke="#4568a5"/><use href="#bolt" x="5" width="13" height="13"/></svg>Common Actions</h2>
      <h2 class="d-flex align-items-center"><svg width="18" height="18"><use href="#bolt"/></svg>More Actions</h2>
      <a href="#" class="plain d-flex align-items-center">Open Drilldown</a>
    </aside>
    <div class="splitter position-relative flex-shrink-0"><button class="grip position-absolute" aria-label="Collapse navigation"><svg width="4" height="8" viewBox="0 0 4 8"><path d="M4 0v8L0 4z" fill="#111"/></svg></button></div>

    <main class="work flex-grow-1">
      <div class="list-head d-flex align-items-center">
        <h3>Assets</h3>
        <button class="ms-3" aria-label="Toggle filter"><svg width="14" height="8" viewBox="0 0 14 8"><path d="M.5.5h13L7 7.500z" fill="#e6a441" stroke="#a9712b" stroke-width=".8"/></svg></button>
        <a href="#" style="color:#1b4a80" class="ms-1">Filter</a>
        <svg class="ms-2" width="6" height="9" viewBox="0 0 6 9"><path d="M1 .5l4 4-4 4" fill="none" stroke="#888" stroke-width="1.300"/></svg>
        <button class="ms-2" aria-label="Advanced search"><svg width="16" height="16"><use href="#lens"/></svg></button>
        <button class="ms-3" aria-label="Clear filter"><svg width="17" height="17"><use href="#eraser"/></svg></button>
        <button class="ms-3" aria-label="Refresh"><svg width="16" height="16" viewBox="0 0 16 16"><path d="M1 7Q1 1 8 1q3 0 4.500 2L15 1v6H9l2-2Q7 2.500 4.500 7z" fill="#79a8e4" stroke="#2f5d9c" stroke-width=".8"/><path d="M15 9q0 6-7 6-3 0-4.500-2L1 15V9h6l-2 2q4 2.500 6.500-2z" fill="#79a8e4" stroke="#2f5d9c" stroke-width=".8"/></svg></button>
        <button class="ms-3 ps-1" aria-label="Previous row"><svg width="13" height="14" viewBox="0 0 13 14"><path d="M4 13V7H.5l6-6.500 6 6.500H9v6z" fill="#ececec" stroke="#ddd"/></svg></button>
        <button class="ms-2 ps-1" aria-label="Next row"><svg width="13" height="14" viewBox="0 0 13 14"><path d="M4 1v6H.5l6 6.500 6-6.500H9V1z" fill="#ececec" stroke="#ddd"/></svg></button>
        <button class="ms-3 ps-1" aria-label="Previous page"><svg width="13" height="12" viewBox="0 0 18 16"><path d="M17 5H9V1L1 8l8 7v-4h8z" fill="#eee" stroke="#d5dde2"/></svg></button>
        <span class="pager ms-1 me-2">1 - 1 of 1</span>
        <button aria-label="Next page"><svg width="13" height="12" fill="#eee" stroke="#d5dde2"><use href="#arrR"/></svg></button>
        <button class="ms-auto" aria-label="Download"><svg width="13" height="11" viewBox="0 0 13 11"><path d="M6 1.500H1.500v8H5" fill="none" stroke="#888"/><path d="M7.500 1h2.500v4h2.500L8.800 10 5 5h2.500z" fill="#555"/></svg></button>
        <button class="ms-4 me-1 ps-1" aria-label="Collapse table"><svg width="9" height="8" viewBox="0 0 9 8"><path d="M.5.5h8v6h-8z" fill="#fff" stroke="#555"/><path d="M0 1.500h9" stroke="#555" stroke-width="2.500"/></svg></button>
      </div>
      <table class="grid-list">
        <colgroup><col style="width:11px"><col style="width:96px"><col style="width:214px"><col style="width:96px"><col style="width:96px"><col style="width:96px"><col style="width:96px"><col style="width:96px"><col style="width:32px"></colgroup>
        <thead>
          <tr class="heads"><th></th><th scope="col"><a href="#">Asset</a></th><th scope="col"><a href="#">Description</a></th><th scope="col"><a href="#">Location</a></th><th scope="col"><a href="#">Parent</a></th><th scope="col" class="text-nowrap"><a href="#">Primary Customer</a></th><th scope="col"><a href="#">Rotating Item</a></th><th scope="col"><a href="#">Site</a></th><th></th></tr>
        </thead>
        <tbody>
          <tr class="finds"><td></td>
            <td><div class="d-flex align-items-center"><input class="fld now" type="text" aria-label="Asset filter"><button class="look" aria-label="Asset lookup"><svg width="12" height="11"><use href="#chev"/></svg></button></div></td>
            <td><input class="fld wide" type="text" aria-label="Description filter"></td>
            <td><div class="d-flex align-items-center"><input class="fld" type="text" aria-label="Location filter"><button class="look" aria-label="Location lookup"><svg width="12" height="11"><use href="#chev"/></svg></button></div></td>
            <td><div class="d-flex align-items-center"><input class="fld" type="text" aria-label="Parent filter"><button class="look" aria-label="Parent lookup"><svg width="12" height="11"><use href="#chev"/></svg></button></div></td>
            <td><div class="d-flex align-items-center"><input class="fld" type="text" aria-label="Primary Customer filter"><button class="look" aria-label="Customer lookup"><svg width="12" height="11"><use href="#chev"/></svg></button></div></td>
            <td><div class="d-flex align-items-center"><input class="fld" type="text" aria-label="Rotating Item filter"><button class="look" aria-label="Item lookup"><svg width="12" height="11"><use href="#chev"/></svg></button></div></td>
            <td><div class="d-flex align-items-center"><input class="fld" type="text" aria-label="Site filter"><button class="look" aria-label="Run filter"><svg width="14" height="14"><use href="#lens"/></svg></button></div></td>
            <td></td></tr>
          <tr class="data"><td></td><td><a href="#">ITAM1010</a></td><td>Lenovo Thinkpad T61</td><td>NORTHERN</td><td></td><td>ACME CORP</td><td>ITAMT61</td><td>PMSCRTP</td><td><button class="align-middle" aria-label="Add bookmark"><svg width="19" height="17" viewBox="0 0 19 17"><path d="M5 1.500L9.500 0 19 13l-4-.5-.5 4z" fill="#4fae4a" stroke="#2b7a2a" stroke-width=".8"/><path d="M4 5h3v2.500h2.500v3H7V13H4v-2.500H1.500v-3H4z" fill="#fbd28a" stroke="#cf8128"/></svg></button></td></tr>
        </tbody>
      </table>
      <div class="sel-row d-flex align-items-center"><input type="checkbox" id="selAll"><label for="selAll" class="fst-italic">Select Records</label></div>
    </main>
  </div>

  <!-- task bar -->
  <footer class="tasks d-flex ui-font">
    <button style="width:44px" aria-label="Start"><svg width="26" height="26" viewBox="0 0 26 26"><path d="M0 4l11-1.600V12.500H0zM12 2.200L26 0v12.500H12zM0 13.500h11v10.100L0 22zM12 13.500h14V26l-14-2.200z" fill="#fff"/></svg></button>
    <button style="width:60px" aria-label="Server Manager"><svg width="30" height="30" viewBox="0 0 30 30"><path d="M1 0h13v8H1zM1 9h13v18H1z" fill="#1c87d3" stroke="#fff"/><path d="M11 4l1.500 1.500M3 12h9" stroke="#fff"/><path d="M12 18v-3h10v3" fill="none" stroke="#5d7284" stroke-width="2"/><rect x="5" y="17" width="24" height="12.500" rx="1" fill="#6f8496" stroke="#fff"/><path d="M7 22h20M10 20.500L7.500 22l2.500 1.500M24 20.500l2.500 1.500-2.500 1.500" fill="none" stroke="#fff"/></svg></button>
    <button style="width:57px" aria-label="PowerShell"><svg width="26" height="24" viewBox="0 0 26 24"><path d="M6 1.500h18.500L20 22.500H1.500z" fill="#2f76ba" stroke="#9fc9e8"/><path d="M7 6l7 6-8 6M14 18h5" fill="none" stroke="#fff" stroke-width="2.400"/></svg></button>
    <button class="open-app" aria-label="File Explorer"><svg width="30" height="28" viewBox="0 0 30 28"><path d="M1 3h9l1 1h6l1 1h9v19H1z" fill="#f3dc8f" stroke="#c0a452"/><path d="M4 1h5v3H4z" fill="#3aa655"/><path d="M11 2h5v3h-5z" fill="#d5483a"/><path d="M19 4h7v3h-7z" fill="#3f82d3"/><path d="M2 6h7l2 2h16q1 0 1 1l1 17H1z" fill="#f8e7a8" stroke="#d3bb70" stroke-width=".6"/><path d="M5 27V17q0-2 2-2h16q2 0 2 2v10h-5v-6H10v6z" fill="#8ecbeb" stroke="#4f9bc8"/></svg></button>
    <button class="open-app" aria-label="Command Prompt"><svg width="28" height="24" viewBox="0 0 28 24"><path d="M0 0h28v24H0z" fill="#dce6ea"/><path d="M1 2.500h26V23H1z" fill="#050505"/><path d="M21 1.300h5" stroke="#777"/><text x="3" y="12" font-size="9" font-weight="700" fill="#fff" font-family="Liberation Mono">C:\_</text></svg></button>
    <button class="open-app slim" aria-label="Firefox"><svg width="28" height="28" viewBox="0 0 28 28"><circle cx="14" cy="15" r="12.800" fill="url(#gFox)"/><circle cx="15" cy="11" r="9.500" fill="#1d4b8e"/><path d="M12 3q5-1 7 1-1 2-4 2-3 1-2 4l-3 1q-1-4 2-8z" fill="#4d9bd6"/><path d="M20 2q6 3 7 10 .5 8-6 13 4-6 3-11-1-6-4-12z" fill="#f6c31c"/><path d="M2 6q2 2.500 5 1.500 3-.5 4 1l3 1.500q-.5 2.500-3.500 3Q9 17 13 18q4 .5 7-3 1 9-7 10.500Q3 24 1.500 15z" fill="#ee7f22"/></svg></button>
    <button class="open-app ms-1" aria-label="Notepad"><svg width="29" height="27" viewBox="0 0 29 27"><path d="M23 2l5 21-6 3-5-2z" fill="#f2f4ee" stroke="#a3a898"/><path d="M10 2l13 1-5 22L1 20z" fill="url(#gPad)" stroke="#4f8d9f" stroke-width=".7"/><path d="M11 .5v3M14 .7v3M17 1v3M20 1.300v3" stroke="#667" stroke-width="1.200"/></svg></button>
    <button class="open-app" aria-label="System monitor"><svg width="30" height="27" viewBox="0 0 30 27"><path d="M1 7l9-1v15l-9-2z" fill="#e6e9ea" stroke="#8b979c" stroke-width=".8"/><path d="M3 9h5M3 12h5" stroke="#999"/><path d="M7 2l17 1v15L7 17z" fill="#eef2f4" stroke="#8b979c"/><path d="M24 3l4-2v16l-4 5z" fill="#b9c1c4" stroke="#8b979c" stroke-width=".7"/><path d="M8 14l4-1 1-6 2 8 2-5 2 4 2-2 1 3" fill="none" stroke="#2472c4" stroke-width="1.300"/><path d="M14 19h6l3 4-2 3H11q0-4 3-7z" fill="#dde1e3" stroke="#8b979c"/></svg></button>
    <button class="open-app" aria-label="Node app"><svg width="26" height="29" viewBox="0 0 26 29"><path d="M13 .7l11.500 6.300v14.500L13 28.300 1.500 21.500V7z" fill="#5fa024" stroke="#b9e07c"/><path d="M13 .7L24.500 7v4L1.500 18V7z" fill="#8fce3e" opacity=".7"/><path d="M7.500 20v-8L13 8.500l5.500 3.500v8H15v-5.500l-2-1.500-2 1.500V20z" fill="#fff"/></svg></button>
    <button class="open-app now" aria-label="Internet Explorer"><svg width="30" height="29" viewBox="0 0 30 29"><path d="M25 20Q21.500 25.500 15.500 25 7.500 24 7.500 15.500T16 6.500Q24.500 7 24.500 15.500H10" fill="none" stroke="#2b86b8" stroke-width="5"/><path d="M25 20Q21.500 25.500 15.500 25 7.500 24 7.500 15.500T16 6.500Q24.500 7 24.500 15.500H10" fill="none" stroke="url(#gIe)" stroke-width="4"/><path d="M27.500 8.500Q29 3 24.500 2.500 17 3 8.500 12 1 21 2 26q1 2.500 5.500 0" fill="none" stroke="#b8952a" stroke-width="3"/><path d="M27.500 8.500Q29 3 24.500 2.500 17 3 8.500 12 1 21 2 26q1 2.500 5.500 0" fill="none" stroke="#f8d640" stroke-width="2.200"/></svg></button>
    <div class="d-flex align-items-center ms-auto">
      <button class="me-2 pe-1" aria-label="Show hidden icons"><svg width="7" height="5" viewBox="0 0 7 5"><path d="M0 4.500h7L3.500.5z" fill="#16282f"/></svg></button>
      <button class="me-2" aria-label="Volume muted"><svg width="15" height="14" viewBox="0 0 15 14"><path d="M1 4h2.500L7.500.5v13L3.500 10H1z" fill="#fff" stroke="#456"/><circle cx="10.500" cy="9.500" r="4.200" fill="#d33b2c"/><path d="M8.800 7.800l3.400 3.400M12.200 7.800l-3.400 3.400" stroke="#fff" stroke-width="1.300"/></svg></button>
      <button aria-label="Network"><svg width="15" height="15" viewBox="0 0 15 15"><path d="M5 2.500h9v7.500H5zM7 13h5M9.500 10v3" fill="none" stroke="#fff" stroke-width="2.500"/><path d="M5 2.500h9v7.500H5zM7 13h5M9.500 10v3" fill="#66cbea" stroke="#345"/><path d="M1 1.500h4v4H1zM3 5.500V13" fill="#fff" stroke="#345"/></svg></button>
      <div class="clock text-center">9:03 AM<br>6/6/2016</div>
    </div>
  </footer>
</div>
</body>
</html>
